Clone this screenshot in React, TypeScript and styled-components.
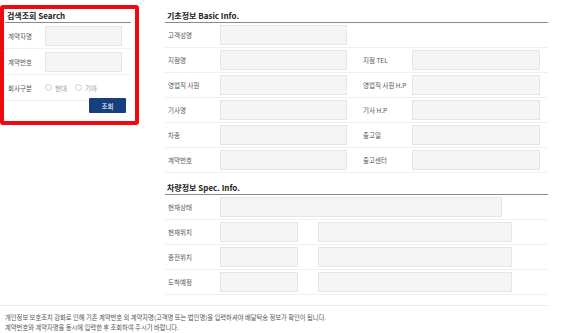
import React from "react";
import styled, { createGlobalStyle } from "styled-components";

const GlobalStyle = createGlobalStyle`
  html, body {
    margin: 0;
    padding: 0;
    background: #ffffff;
    font-family: "Noto Sans CJK KR", "Noto Sans", sans-serif;
    color: #333;
  }
`;

const Page = styled.div`
  width: 564px;
  height: 333px;
  display: flex;
  flex-direction: column;
  overflow: hidden;
`;

const Top = styled.div`
  display: flex;
  align-items: flex-start;
  padding-top: 5px;
`;

const SearchPanel = styled.div`
  width: 126px;
  height: 111px;
  border: 4px solid #ee0a0f;
  border-radius: 3px;
  padding: 1px 4px 0 1px;
  box-sizing: content-box;
  display: flex;
  flex-direction: column;
`;

const Title = styled.div`
  font-size: 8px;
  font-weight: 700;
  color: #222;
  line-height: 11px;
  padding: 0 0 1px 2px;
  border-bottom: 1.5px solid #8a8a8a;
`;

const SearchRow = styled.div`
  display: flex;
  align-items: center;
  height: 25px;
  border-bottom: 1px solid #f0f0f0;
`;

const SearchLabel = styled.div`
  width: 37px;
  padding-left: 3px;
  font-size: 6.5px;
  color: #555;
`;

const Field = styled.div<{ $w: number; $h?: number }>`
  width: ${(p) => p.$w}px;
  height: ${(p) => p.$h ?? 19}px;
  background: #f5f5f5;
  border: 1px solid #e6e6e6;
  box-sizing: border-box;
`;

const Radio = styled.label`
  display: flex;
  align-items: center;
  gap: 3px;
  font-size: 6.5px;
  color: #999;
  margin-right: 8px;
`;

const RadioDot = styled.span`
  width: 7px;
  height: 7px;
  border-radius: 50%;
  border: 1px solid #d0d0d0;
  background: #fff;
  box-sizing: border-box;
`;

const ButtonRow = styled.div`
  display: flex;
  justify-content: flex-end;
  padding: 0 5px 0 0;
  margin-top: -3px;
`;

const SearchButton = styled.button`
  width: 37px;
  height: 15px;
  border: none;
  border-radius: 1px;
  background: #173f7e;
  color: #fff;
  font-family: inherit;
  font-size: 6.5px;
  padding: 0;
`;

const Main = styled.div`
  margin: 5px 0 0 26px;
  width: 383px;
  display: flex;
  flex-direction: column;
`;

const Section = styled.div`
  display: flex;
  flex-direction: column;
  & + & {
    margin-top: 9px;
  }
`;

const InfoRow = styled.div`
  display: flex;
  align-items: center;
  height: 25px;
  border-bottom: 1px solid #f0f0f0;
  box-sizing: border-box;
`;

const Label = styled.div<{ $w: number }>`
  width: ${(p) => p.$w}px;
  padding-left: 3px;
  box-sizing: border-box;
  font-size: 6.5px;
  color: #555;
`;

const Spacer = styled.div<{ $w: number }>`
  width: ${(p) => p.$w}px;
`;

const Footer = styled.div`
  width: 548px;
  margin-top: 10px;
  border-top: 1px solid #eeeeee;
  padding: 7px 0 0 5px;
  box-sizing: border-box;
  font-size: 6.3px;
  line-height: 10px;
  color: #555;
`;

const basicRows: [string, string | null][] = [
  ["고객성명", null],
  ["지점명", "지점 TEL"],
  ["영업직 사원", "영업직 사원 H.P"],
  ["기사명", "기사 H.P"],
  ["차종", "출고일"],
  ["계약번호", "출고센터"],
];

const specRows = ["현재위치", "종전위치", "도착예정"];

export default function App() {
  return (
    <Page>
      <GlobalStyle />
      <Top>
        <SearchPanel>
          <Title>검색조회 Search</Title>
          <SearchRow>
            <SearchLabel>계약자명</SearchLabel>
            <Field $w={77} $h={20} />
          </SearchRow>
          <SearchRow>
            <SearchLabel>계약번호</SearchLabel>
            <Field $w={77} $h={20} />
          </SearchRow>
          <SearchRow>
            <SearchLabel>회사구분</SearchLabel>
            <Radio>
              <RadioDot />
              현대
            </Radio>
            <Radio>
              <RadioDot />
              기아
            </Radio>
          </SearchRow>
          <ButtonRow>
            <SearchButton>조회</SearchButton>
          </ButtonRow>
        </SearchPanel>
        <Main>
          <Section>
            <Title>기초정보 Basic Info.</Title>
            {basicRows.map(([left, right]) => (
              <InfoRow key={left}>
                <Label $w={55}>{left}</Label>
                <Field $w={127} $h={20} />
                {right && (
                  <>
                    <Spacer $w={13} />
                    <Label $w={52}>{right}</Label>
                    <Field $w={128} $h={20} />
                  </>
                )}
              </InfoRow>
            ))}
          </Section>
          <Section>
            <Title>차량정보 Spec. Info.</Title>
            <InfoRow>
              <Label $w={55}>현재상태</Label>
              <Field $w={282} $h={20} />
            </InfoRow>
            {specRows.map((l) => (
              <InfoRow key={l}>
                <Label $w={55}>{l}</Label>
                <Field $w={78} $h={20} />
                <Spacer $w={20} />
                <Field $w={194} $h={20} />
              </InfoRow>
            ))}
          </Section>
        </Main>
      </Top>
      <Footer>
        개인정보 보호조치 강화로 인해 기존 계약번호 외 계약자명(고객명 또는 법인명)을 입력하셔야 배달탁송 정보가 확인이 됩니다.
        <br />
        계약번호와 계약자명을 동시에 입력한 후 조회하여 주시기 바랍니다.
      </Footer>
    </Page>
  );
}
